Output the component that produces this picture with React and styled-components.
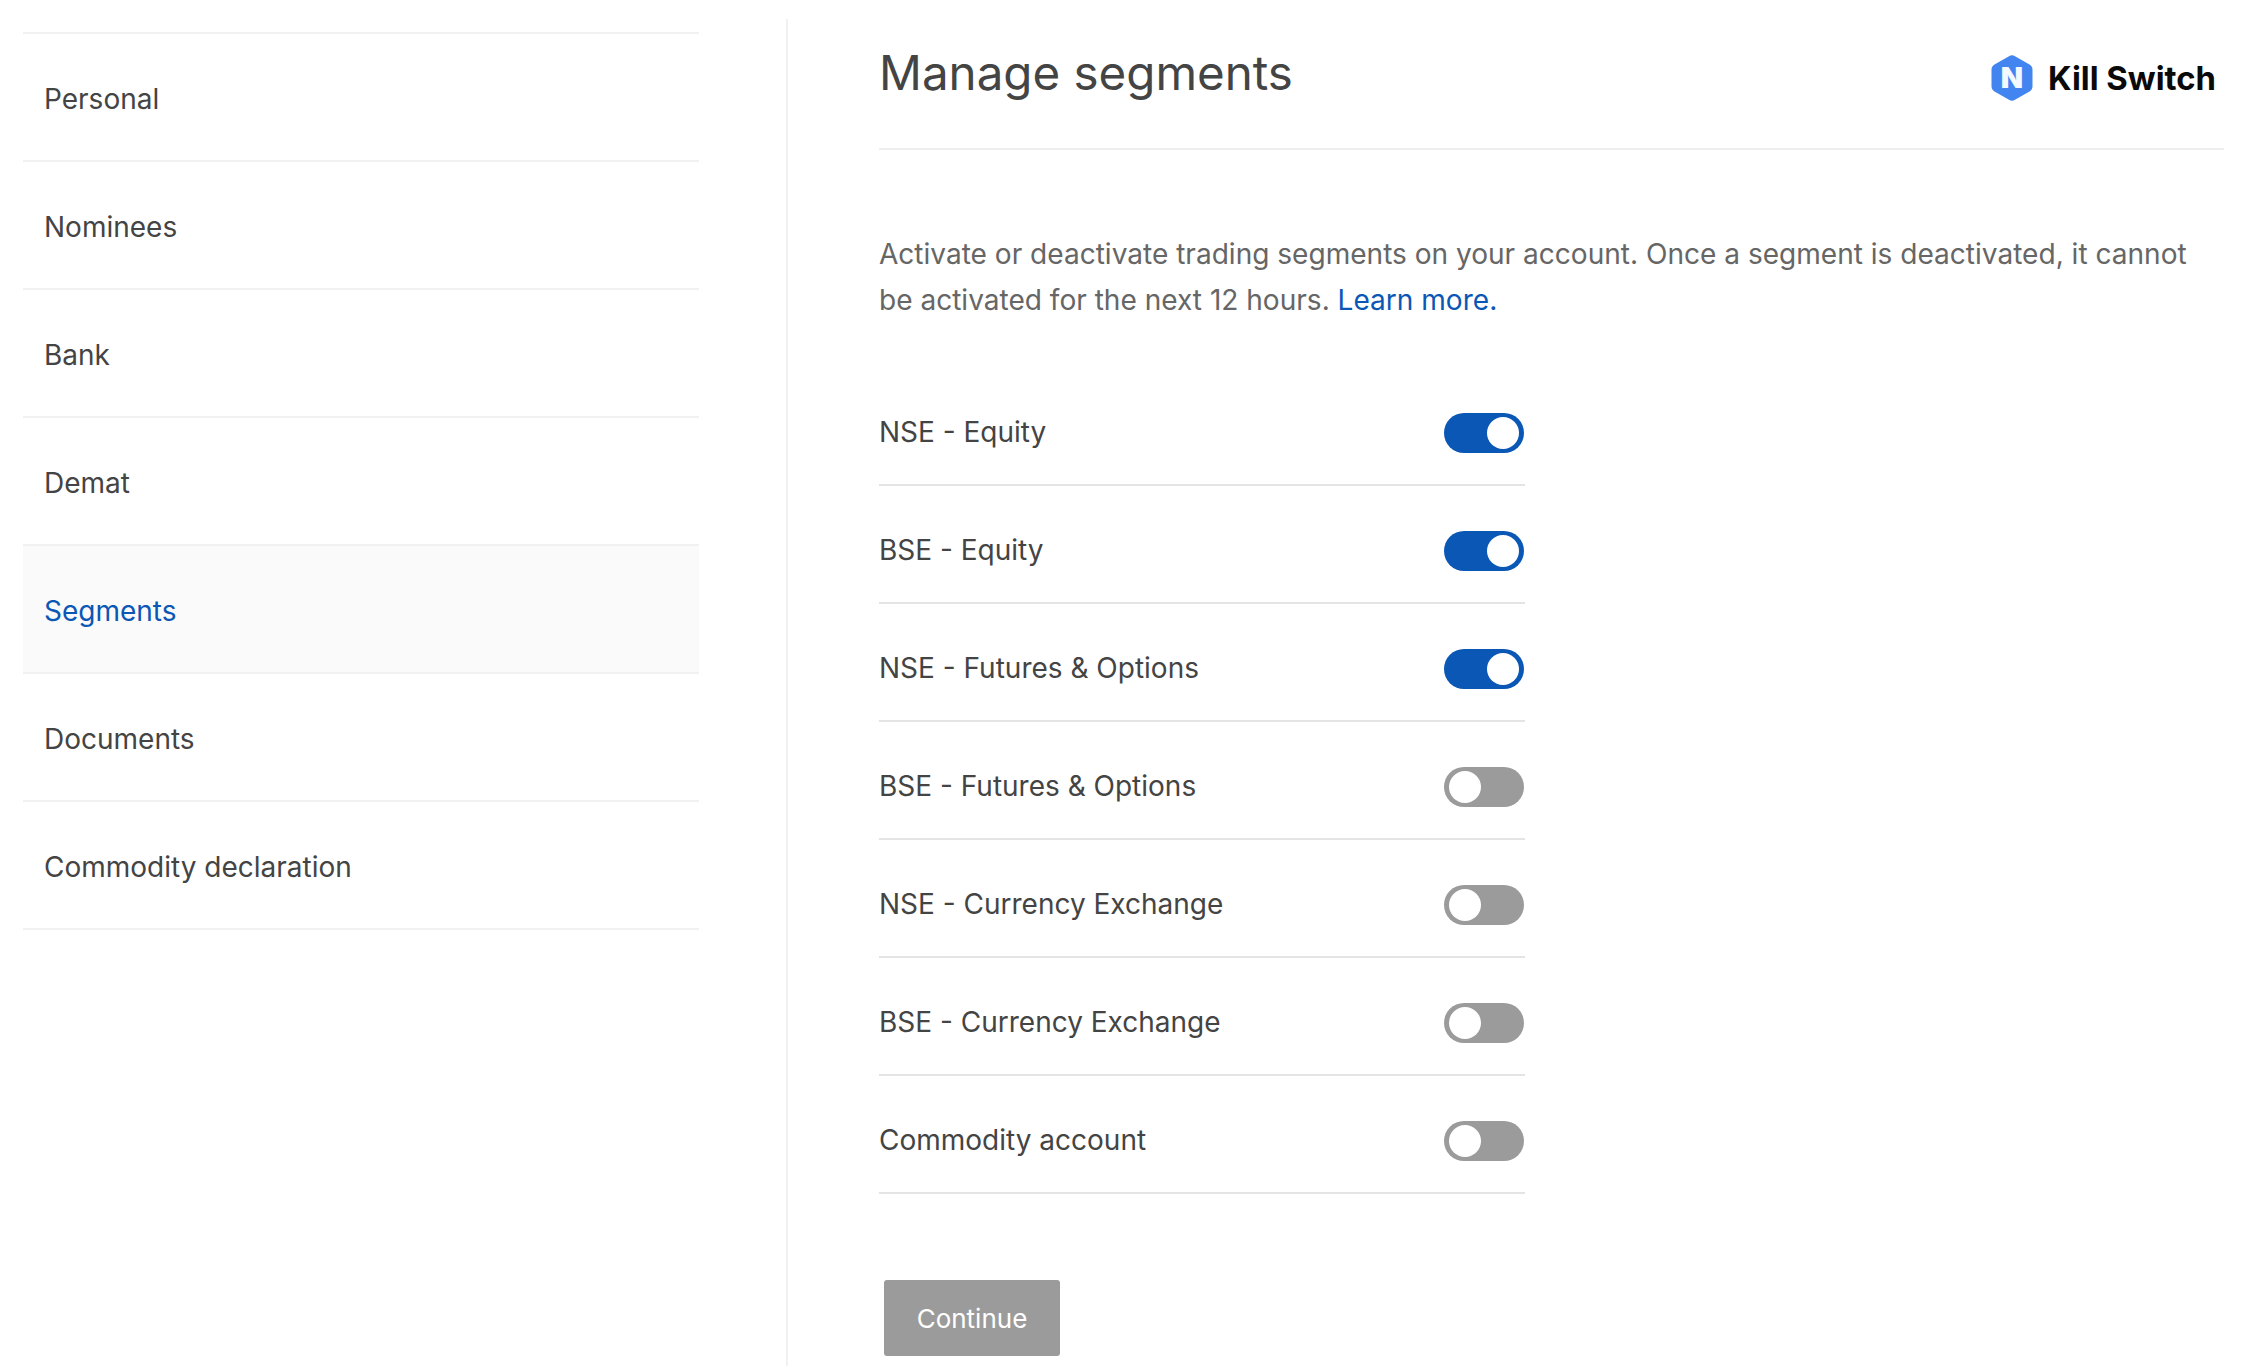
import React from 'react';
import styled, { createGlobalStyle } from 'styled-components';

const GlobalStyle = createGlobalStyle`
  html, body {
    margin: 0;
    padding: 0;
    background: #fff;
    height: 100%;
    overflow: hidden;
  }
  body {
    font-family: Inter, "Noto Sans", sans-serif;
    color: #444;
  }
`;

const Page = styled.div`
  display: flex;
  align-items: flex-start;
  height: 1366px;
  overflow: hidden;
`;

const Sidebar = styled.nav`
  width: 786px;
  flex: none;
  box-sizing: border-box;
  padding: 32px 87px 0 23px;
`;

const NavList = styled.ul`
  list-style: none;
  margin: 0;
  padding: 0;
  border-top: 2px solid #f1f1f1;
`;

const NavItem = styled.li`
  height: 128px;
  box-sizing: border-box;
  display: flex;
  align-items: center;
  padding: 3px 0 0 21px;
  font-size: 28px;
  border-bottom: 2px solid #f1f1f1;
  background: ${(p) => (p.$active ? '#fafafa' : 'transparent')};
  color: ${(p) => (p.$active ? '#0b57b5' : '#444')};
`;

const Main = styled.main`
  flex: 1;
  margin-top: 19px;
  height: 1347px;
  box-sizing: border-box;
  border-left: 2px solid #f1f1f1;
  padding: 0 40px 0 91px;
`;

const Header = styled.header`
  height: 131px;
  box-sizing: border-box;
  display: flex;
  justify-content: space-between;
  align-items: flex-start;
  border-bottom: 2px solid #eee;
`;

const Title = styled.h1`
  margin: 22px 0 0;
  font-size: 47.5px;
  line-height: 64px;
  font-weight: 400;
  color: #444;
`;

const KillSwitch = styled.div`
  display: flex;
  align-items: center;
  gap: 15px;
  margin: 36px 8px 0 0;
  font-size: 32.8px;
  line-height: 46px;
  font-weight: 700;
  color: #0a0a0a;
`;

const Intro = styled.p`
  margin: 81px 0 0;
  font-size: 28.06px;
  line-height: 46px;
  color: #666;
`;

const Link = styled.a`
  color: #0b57b5;
  text-decoration: none;
`;

const SegmentList = styled.div`
  width: 646px;
  margin-top: 45px;
`;

const SegmentRow = styled.div`
  height: 118px;
  box-sizing: border-box;
  display: flex;
  justify-content: space-between;
  align-items: center;
  padding-top: 12px;
  border-bottom: 2px solid #e4e4e4;
  font-size: 28px;
  color: #444;
`;

const Toggle = styled.span`
  display: block;
  position: relative;
  width: 80px;
  height: 40px;
  flex: none;
  margin: 2px 1px 0 0;
  border-radius: 20px;
  background: ${(p) => (p.$on ? '#0b57b5' : '#9b9b9b')};
`;

const Knob = styled.span`
  position: absolute;
  top: 4px;
  left: ${(p) => (p.$on ? '43px' : '5px')};
  width: 32px;
  height: 32px;
  border-radius: 50%;
  background: #fff;
`;

const ContinueButton = styled.button`
  display: block;
  margin: 86px 0 0 5px;
  width: 176px;
  height: 76px;
  border: 0;
  border-radius: 3px;
  background: #9b9b9b;
  color: #fff;
  font-family: inherit;
  font-size: 26px;
`;

const navItems = ['Personal', 'Nominees', 'Bank', 'Demat', 'Segments', 'Documents', 'Commodity declaration'];

const segments = [
  { name: 'NSE - Equity', on: true },
  { name: 'BSE - Equity', on: true },
  { name: 'NSE - Futures & Options', on: true },
  { name: 'BSE - Futures & Options', on: false },
  { name: 'NSE - Currency Exchange', on: false },
  { name: 'BSE - Currency Exchange', on: false },
  { name: 'Commodity account', on: false },
];

function Logo() {
  return (
    <svg width="42" height="46" viewBox="0 0 42 46">
      <path
        d="M18 1.2 a6 6 0 0 1 6 0 L38.5 9.6 a6 6 0 0 1 3 5.2 V31.2 a6 6 0 0 1 -3 5.2 L24 44.8 a6 6 0 0 1 -6 0 L3.5 36.4 a6 6 0 0 1 -3 -5.2 V14.8 a6 6 0 0 1 3 -5.2 Z"
        fill="#4285f0"
      />
      <text x="21" y="33" textAnchor="middle" fontSize="29" fontWeight="900" fill="#f4f8ff" fontFamily="Inter, sans-serif">N</text>
    </svg>
  );
}

export default function App() {
  return (
    <>
      <GlobalStyle />
      <Page>
        <Sidebar>
          <NavList>
            {navItems.map((item) => (
              <NavItem key={item} $active={item === 'Segments'}>{item}</NavItem>
            ))}
          </NavList>
        </Sidebar>
        <Main>
          <Header>
            <Title>Manage segments</Title>
            <KillSwitch>
              <Logo />
              Kill Switch
            </KillSwitch>
          </Header>
          <Intro>
            Activate or deactivate trading segments on your account. Once a segment is deactivated, it cannot be activated for the next 12 hours. <Link href="#">Learn more.</Link>
          </Intro>
          <SegmentList>
            {segments.map((s) => (
              <SegmentRow key={s.name}>
                {s.name}
                <Toggle $on={s.on}><Knob $on={s.on} /></Toggle>
              </SegmentRow>
            ))}
          </SegmentList>
          <ContinueButton>Continue</ContinueButton>
        </Main>
      </Page>
    </>
  );
}
